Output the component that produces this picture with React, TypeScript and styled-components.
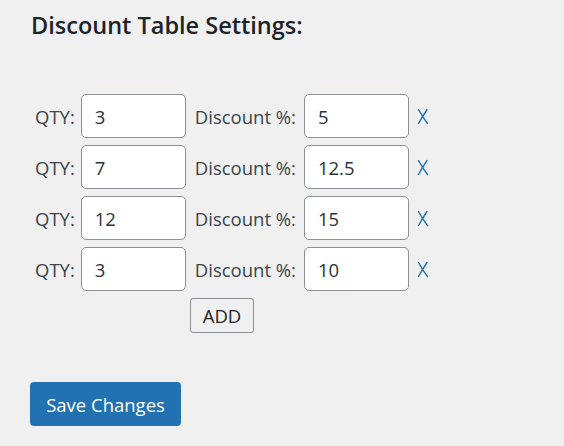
import styled, { createGlobalStyle } from "styled-components";

const GlobalStyle = createGlobalStyle`
  body {
    margin: 0;
    background: #f0f0f1;
    font-family: "Open Sans", "Noto Sans", sans-serif;
    color: #3c434a;
  }
`;

const rows = [
  { qty: "3", discount: "5" },
  { qty: "7", discount: "12.5" },
  { qty: "12", discount: "15" },
  { qty: "3", discount: "10" },
];

const CrossIcon = () => (
  <svg width="12" height="17" viewBox="0 0 12 17" fill="none">
    <path d="M1.5 1.5 C4 6, 7 11, 10.5 15.5" stroke="#2271b1" strokeWidth="1.4" strokeLinecap="round" />
    <path d="M10 1.5 C7 6, 4 11, 1.5 15.5" stroke="#2271b1" strokeWidth="1.4" strokeLinecap="round" />
  </svg>
);

const App = () => {
  return (
    <Page>
      <GlobalStyle />
      <Title>Discount Table Settings:</Title>
      <Table>
        {rows.map((row, i) => (
          <Row key={i}>
            <Label>QTY:</Label>
            <Field defaultValue={row.qty} />
            <Label $wide>Discount %:</Label>
            <Field defaultValue={row.discount} />
            <Remove title="Remove">
              <CrossIcon />
            </Remove>
          </Row>
        ))}
        <AddRow>
          <AddButton>ADD</AddButton>
        </AddRow>
      </Table>
      <SaveButton>Save Changes</SaveButton>
    </Page>
  );
};

const Page = styled.div`
  padding: 8px 0 0 31px;
`;

const Title = styled.h2`
  margin: 0;
  font-size: 23.5px;
  font-weight: 600;
  color: #1d2327;
  line-height: 34px;
`;

const Table = styled.div`
  display: flex;
  flex-direction: column;
  gap: 7px;
  margin-top: 52px;
  padding-left: 4px;
`;

const Row = styled.div`
  display: flex;
  align-items: center;
  height: 44px;
`;

const Label = styled.span<{ $wide?: boolean }>`
  font-size: 18.5px;
  margin-right: ${(p) => (p.$wide ? 8 : 6)}px;
  margin-left: ${(p) => (p.$wide ? 9 : 0)}px;
`;

const Field = styled.input`
  box-sizing: border-box;
  width: 105px;
  height: 44px;
  border: 1px solid #8c8f94;
  border-radius: 5px;
  background: #fff;
  padding: 0 13px;
  font-family: inherit;
  font-size: 18.5px;
  color: #2c3338;
  outline: none;
`;

const Remove = styled.span`
  display: flex;
  margin-left: 8px;
  cursor: pointer;
`;

const AddRow = styled.div`
  padding-left: 155px;
`;

const AddButton = styled.button`
  box-sizing: border-box;
  width: 64px;
  height: 35px;
  border: 1px solid #8c8f94;
  border-radius: 3px;
  background: #f0f0f0;
  font-family: inherit;
  font-size: 18.5px;
  color: #1d2327;
  padding: 0;
`;

const SaveButton = styled.button`
  display: block;
  box-sizing: border-box;
  margin-top: 49px;
  margin-left: -1px;
  width: 151px;
  height: 44px;
  border: none;
  border-radius: 4px;
  background: #2271b1;
  color: #fff;
  font-family: inherit;
  font-size: 18.5px;
  padding: 0;
`;

export default App;
